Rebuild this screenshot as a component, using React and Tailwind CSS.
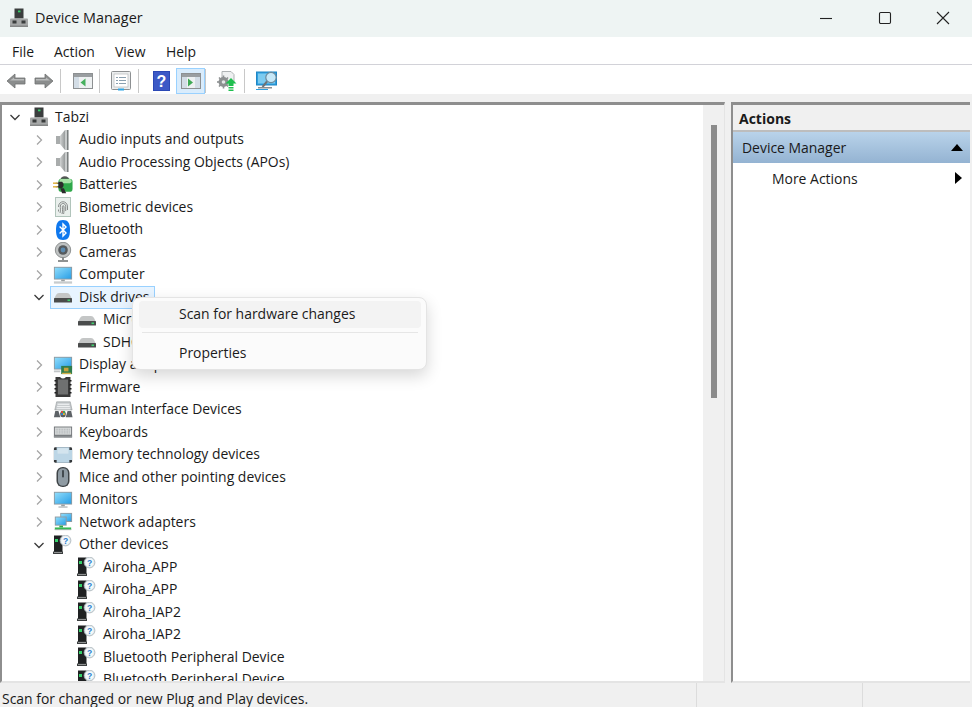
import React from "react";

const Pc = ({ s = 20 }) => (
  <svg width={s} height={s} viewBox="0 0 20 20">
    <rect x="5.5" y="0.5" width="9" height="10" fill="#3a3d3d" />
    <rect x="9" y="2.5" width="2.5" height="1.8" fill="#35d06a" />
    <rect x="1" y="10.5" width="18" height="8.5" rx="1" fill="#a5a7a7" />
    <rect x="3.5" y="12.5" width="4" height="3" fill="#3a3d3d" />
    <rect x="12.5" y="12.5" width="4" height="3" fill="#3a3d3d" />
    <rect x="1" y="17.5" width="18" height="1.5" fill="#858787" />
  </svg>
);
const Speaker = () => (
  <svg width="20" height="20" viewBox="0 0 20 20">
    <defs><linearGradient id="spk" x1="0" x2="1" y1="0" y2="0"><stop offset="0" stopColor="#d0d2d2" /><stop offset="1" stopColor="#6f7474" /></linearGradient></defs>
    <rect x="3" y="6" width="5" height="8" fill="#a9acac" />
    <path d="M7 6 L12 0 H15.5 V20 H12 L7 14 Z" fill="url(#spk)" />
    <rect x="12" y="0" width="2" height="20" fill="#c9cccc" />
  </svg>
);
const Battery = () => (
  <svg width="22" height="20" viewBox="0 0 22 20">
    <path d="M9 2 Q13 -1 17 2 L18 4 L8 4 Z" fill="#555" />
    <rect x="6" y="3" width="15.5" height="14.5" rx="3.5" fill="#2fa84a" />
    <rect x="7" y="3.5" width="13.5" height="4.5" rx="2" fill="#a7e2a6" />
    <path d="M3 7.5 H6 V6.5 H10 Q13.5 10 10 13.5 H6 V12.5 H3 V11.5 H6 V8.5 H3 Z" fill="#2b2b2b" />
    <rect x="0" y="7.2" width="5" height="1.6" fill="#e0b23c" />
    <rect x="0" y="11.2" width="5" height="1.6" fill="#e0b23c" />
    <path d="M8 13.5 L10 19 H14.5 L12 13.5 Z" fill="#2b2b2b" />
  </svg>
);
const Bio = () => (
  <svg width="20" height="20" viewBox="0 0 20 20">
    <rect x="2.5" y="0.5" width="15" height="19" fill="#e9efec" stroke="#b1c4bb" />
    <g fill="none" stroke="#7d7f7f" strokeWidth="0.9">
      <path d="M5.5 10 C5.5 3 14.5 3 14.5 10 V13" />
      <path d="M7 16 C8 13 7 11 7.3 9 C8 5.5 12.5 5.5 12.7 9.5 V14" />
      <path d="M9 17 C10 14 9.2 11 9.4 9.5 C9.8 8 11 8.5 11 10 C11 13 11 15 10.6 17" />
      <path d="M5.5 12.5 V14.5" />
    </g>
  </svg>
);
const Bt = () => (
  <svg width="20" height="20" viewBox="0 0 20 20">
    <path d="M10 0 C15 0 17 3 17 10 C17 17 15 20 10 20 C5 20 3 17 3 10 C3 3 5 0 10 0 Z" fill="#0f78ee" />
    <path d="M6.6 6.6 L13 13 L10 16 V4 L13 7 L6.6 13.4" fill="none" stroke="#fff" strokeWidth="1.4" />
  </svg>
);
const Camera = () => (
  <svg width="20" height="20" viewBox="0 0 20 20">
    <circle cx="10" cy="8" r="7.7" fill="#bfc2c2" stroke="#8f9292" />
    <circle cx="10" cy="8" r="4.8" fill="#565a5d" />
    <circle cx="10" cy="8" r="2.4" fill="#5a8ab0" />
    <rect x="9" y="15" width="2" height="3" fill="#8b8e8e" />
    <rect x="5" y="18" width="10" height="2" fill="#8f9292" />
  </svg>
);
const Screen = ({ x = 0, y = 0, w = 20, h = 14 }) => (
  <g>
    <rect x={x} y={y} width={w} height={h} fill="#8f9aa0" />
    <rect x={x + 1} y={y + 1} width={w - 2} height={h - 2} fill="url(#scr)" />
  </g>
);
const ScrDefs = ({ id = "scr" }) => (
  <defs><linearGradient id={id} x1="0" x2="1" y1="0" y2="1"><stop offset="0" stopColor="#8fdcfb" /><stop offset="1" stopColor="#2a9fe6" /></linearGradient></defs>
);
const Computer = () => (
  <svg width="22" height="20" viewBox="0 0 22 20">
    <ScrDefs />
    <Screen x={1} y={1} w={20} h={14} />
    <rect x="9" y="15" width="4" height="2" fill="#9aa0a3" />
    <rect x="1" y="17" width="20" height="2.5" fill="#c7cbcd" />
  </svg>
);
const Monitor = () => (
  <svg width="22" height="20" viewBox="0 0 22 20">
    <ScrDefs />
    <Screen x={1} y={1} w={20} h={14} />
    <rect x="9" y="15" width="4" height="2" fill="#9aa0a3" />
    <rect x="6" y="17" width="10" height="1.5" fill="#b5babc" />
  </svg>
);
const Disk = ({ s = 20 }) => (
  <svg width={s} height={s} viewBox="0 0 20 20">
    <path d="M3 8 Q4 6 6 6 H14 Q16 6 17 8 L18.5 11 H1.5 Z" fill="#c4c6c6" />
    <rect x="1" y="11" width="18" height="4.5" rx="0.5" fill="#4a4c4c" />
    <rect x="14.5" y="12.5" width="2.5" height="1.6" fill="#3fd06d" />
  </svg>
);
const Display = () => (
  <svg width="22" height="20" viewBox="0 0 22 20">
    <ScrDefs />
    <Screen x={1} y={1} w={20} h={14} />
    <rect x="9" y="11" width="12" height="9" fill="#2f7d4c" />
    <rect x="12" y="13" width="5" height="4" fill="#c8a13d" />
    <rect x="10" y="18.5" width="10" height="1.5" fill="#d6b04a" />
    <rect x="1" y="16" width="7" height="2" fill="#c2c6c8" />
  </svg>
);
const Firmware = () => (
  <svg width="20" height="20" viewBox="0 0 20 20">
    <path d="M2.5 0 H7 Q10 3 13 0 H17.5 V20 H2.5 Z" fill="#3a3a3a" />
    <rect x="5" y="2.5" width="10" height="15" fill="#6f7070" />
    <g fill="#1d1d1d">
      <rect x="1.5" y="3" width="2" height="1.5" /><rect x="1.5" y="7" width="2" height="1.5" /><rect x="1.5" y="11" width="2" height="1.5" /><rect x="1.5" y="15" width="2" height="1.5" />
      <rect x="16.5" y="3" width="2" height="1.5" /><rect x="16.5" y="7" width="2" height="1.5" /><rect x="16.5" y="11" width="2" height="1.5" /><rect x="16.5" y="15" width="2" height="1.5" />
    </g>
  </svg>
);
const Hid = () => (
  <svg width="22" height="20" viewBox="0 0 22 20">
    <path d="M4 1 H19 L21 10 H2 Z" fill="#c4c8cb" stroke="#8f9396" strokeWidth="0.6" />
    <g fill="#eef0f1"><rect x="5" y="3" width="13" height="1.4" /><rect x="4.5" y="5.5" width="14" height="1.4" /><rect x="4" y="8" width="15" height="1.2" /></g>
    <path d="M1 18 L2.5 11 H6 L8 18 Z" fill="#5d6266" />
    <path d="M14 18 L16 11 H20 L21.5 18 Z" fill="#5d6266" />
    <rect x="8" y="11" width="6" height="7" rx="2.5" fill="#595c60" />
    <rect x="9" y="11" width="2" height="2.5" fill="#e0483c" /><rect x="11" y="11" width="2" height="2.5" fill="#3aa655" />
    <rect x="9" y="13.5" width="2" height="2" fill="#2d86d8" /><rect x="11" y="13.5" width="2" height="2" fill="#e7bb35" />
  </svg>
);
const Keyboard = () => (
  <svg width="22" height="20" viewBox="0 0 22 20">
    <rect x="1" y="4" width="20" height="12" fill="#6f7376" />
    <rect x="2" y="5" width="18" height="8" fill="#d7dadb" />
    <g stroke="#9aa0a3" strokeWidth="0.8"><path d="M3 7 H19" strokeDasharray="1 0.8" /><path d="M3 9 H19" strokeDasharray="1 0.8" /><path d="M3 11 H19" strokeDasharray="1 0.8" /></g>
    <rect x="1" y="14" width="20" height="2" fill="#8b8f92" />
  </svg>
);
const Memory = () => (
  <svg width="22" height="20" viewBox="0 0 22 20">
    <rect x="1" y="1.5" width="20" height="17" rx="1.5" fill="#34383b" />
    <rect x="1" y="4.5" width="20" height="11" fill="#bcd6e6" />
    <rect x="4" y="1.5" width="14" height="17" fill="#bcd6e6" />
    <rect x="5" y="2.5" width="12" height="6" fill="#d3e4ee" />
  </svg>
);
const Mouse = () => (
  <svg width="20" height="20" viewBox="0 0 20 20">
    <rect x="3.5" y="0" width="13" height="20" rx="6" fill="#3f4447" />
    <rect x="5" y="1.2" width="10" height="17.6" rx="4.8" fill="#8f9ba3" />
    <rect x="9.2" y="3" width="1.6" height="7.5" rx="0.8" fill="#30363a" />
  </svg>
);
const Network = () => (
  <svg width="22" height="20" viewBox="0 0 22 20">
    <ScrDefs />
    <Screen x={8} y={0} w={13} h={10} />
    <Screen x={2} y={4} w={13} h={10} />
    <rect x="7" y="14" width="4" height="2" fill="#2fa84a" />
    <rect x="2" y="16" width="18" height="2.8" fill="#35b852" />
    <rect x="2" y="18" width="18" height="1" fill="#b7babc" />
  </svg>
);
const Other = () => (
  <svg width="20" height="20" viewBox="0 0 20 20">
    <path d="M1 0.5 H9.5 V17 H1 Z" fill="#1f2122" />
    <rect x="2" y="4" width="3" height="3" fill="#35d06a" />
    <rect x="0" y="16.5" width="10" height="2.5" fill="#3b3e3f" />
    <rect x="1" y="17" width="8" height="0.8" fill="#a5a7a7" />
    <circle cx="12.5" cy="5.5" r="5.4" fill="#dfe7ec" stroke="#a8b2b8" strokeWidth="0.8" />
    <circle cx="12.5" cy="5.5" r="4" fill="#f5f8fa" />
    <text x="12.5" y="8.6" textAnchor="middle" fontSize="8.5" fontWeight="700" fill="#2a7fd0" fontFamily="Liberation Sans">?</text>
  </svg>
);

const Chev = ({ open }) => (
  <svg width="16" height="16" viewBox="0 0 16 16" fill="none" stroke={open ? "#3a3a3a" : "#a6a6a6"} strokeWidth="1.3">
    {open ? <path d="M3.5 6 L8 10.5 L12.5 6" /> : <path d="M6 3.5 L10.5 8 L6 12.5" />}
  </svg>
);

const Row = ({ d, c, icon: I, label, selected }) => (
  <div className="flex items-center h-[22.5px]" style={{ paddingLeft: 5 + 24 * d }}>
    <span className="w-[16px] h-[16px] flex items-center justify-center">{c && <Chev open={c === "o"} />}</span>
    <span className={selected ? "flex items-center h-[22.5px] ml-[3px] pl-[2px] pr-[5px] bg-[#e8f4ff] border border-[#99d1ff]" : "flex items-center ml-[6px]"}>
      <span className="w-[20px] h-[20px] flex items-center justify-center overflow-visible"><I /></span>
      <span className="ml-[6px] whitespace-nowrap">{label}</span>
    </span>
  </div>
);

const rows = [
  [0, "o", Pc, "Tabzi"],
  [1, "c", Speaker, "Audio inputs and outputs"],
  [1, "c", Speaker, "Audio Processing Objects (APOs)"],
  [1, "c", Battery, "Batteries"],
  [1, "c", Bio, "Biometric devices"],
  [1, "c", Bt, "Bluetooth"],
  [1, "c", Camera, "Cameras"],
  [1, "c", Computer, "Computer"],
  [1, "o", Disk, "Disk drives", true],
  [2, null, Disk, "Microsoft Virtual Disk"],
  [2, null, Disk, "SDHC Card"],
  [1, "c", Display, "Display adapters"],
  [1, "c", Firmware, "Firmware"],
  [1, "c", Hid, "Human Interface Devices"],
  [1, "c", Keyboard, "Keyboards"],
  [1, "c", Memory, "Memory technology devices"],
  [1, "c", Mouse, "Mice and other pointing devices"],
  [1, "c", Monitor, "Monitors"],
  [1, "c", Network, "Network adapters"],
  [1, "o", Other, "Other devices"],
  [2, null, Other, "Airoha_APP"],
  [2, null, Other, "Airoha_APP"],
  [2, null, Other, "Airoha_IAP2"],
  [2, null, Other, "Airoha_IAP2"],
  [2, null, Other, "Bluetooth Peripheral Device"],
  [2, null, Other, "Bluetooth Peripheral Device"],
];

const Sep = () => <span className="w-px h-[24px] bg-[#c8c8c8]" />;
const Arrow = ({ dir }) => (
  <svg width="20" height="18" viewBox="0 0 20 18">
    <path d={dir === "l" ? "M1 9 L9 2 V6 H19 V12 H9 V16 Z" : "M19 9 L11 2 V6 H1 V12 H11 V16 Z"} fill="#8b8d8d" stroke="#707272" strokeWidth="0.8" />
    <path d={dir === "l" ? "M4 8.5 L8 5.5 V7 H18 V8.5 Z" : "M16 8.5 L12 5.5 V7 H2 V8.5 Z"} fill="#b9bbbb" />
  </svg>
);
const Win = ({ arrow }) => (
  <svg width="20" height="18" viewBox="0 0 20 18">
    <rect x="0.5" y="1.5" width="19" height="15" fill="#fff" stroke="#8d9092" />
    <rect x="1" y="2" width="18" height="3" fill="#9a9ea1" />
    <rect x="1" y="5" width="5" height="11" fill="#d3dde6" />
    <rect x="6" y="5" width="13" height="11" fill="#eef1f2" />
    <rect x="14" y="5" width="5" height="11" fill={arrow === "r" ? "#d3dde6" : "#eef1f2"} />
    {arrow === "l"
      ? <path d="M7.5 10.5 L12.5 6.5 V14.5 Z" fill="#46b05e" />
      : <path d="M12 10.5 L7 6.5 V14.5 Z" fill="#3fa955" />}
  </svg>
);
const Props = () => (
  <svg width="20" height="20" viewBox="0 0 20 20">
    <rect x="0.5" y="0.5" width="19" height="18" rx="1" fill="#eceeef" stroke="#8d9092" />
    <rect x="3" y="3" width="14" height="13" fill="#fff" stroke="#b4b8ba" strokeWidth="0.7" />
    <g stroke="#8aa0b0" strokeWidth="1"><path d="M5 6.5 H7" /><path d="M5 9.5 H7" /><path d="M5 12.5 H7" /><path d="M8 6.5 H15" /><path d="M8 9.5 H15" /><path d="M8 12.5 H15" /></g>
    <rect x="7" y="17.5" width="6" height="2" fill="#2ea6e6" />
  </svg>
);
const Help = () => (
  <svg width="17" height="20" viewBox="0 0 17 20">
    <rect width="17" height="20" fill="#2b48b5" />
    <rect x="1" y="1" width="15" height="18" fill="#3c59c6" />
    <text x="8.5" y="16" textAnchor="middle" fontSize="16" fontWeight="700" fill="#fff" fontFamily="Liberation Sans">?</text>
  </svg>
);
const Update = () => (
  <svg width="20" height="20" viewBox="0 0 20 20">
    <path d="M5 0.5 H14 L17 3.5 V11 H5 Z" fill="#eef0f1" stroke="#aeb2b4" />
    <circle cx="6.5" cy="11" r="5" fill="#8d9092" />
    <g stroke="#8d9092" strokeWidth="1.6"><path d="M6.5 4.5 V17.5" /><path d="M0 11 H13" /><path d="M2 6.5 L11 15.5" /><path d="M11 6.5 L2 15.5" /></g>
    <circle cx="6.5" cy="11" r="1.8" fill="#e4e6e7" />
    <path d="M14 7 L19.5 12.5 H16.5 V15 H11.5 V12.5 H8.5 Z" fill="#1fbf4f" />
    <rect x="11.5" y="16" width="5" height="1.5" fill="#1fbf4f" />
    <rect x="11.5" y="18.5" width="5" height="1.5" fill="#1fbf4f" />
  </svg>
);
const Scan = () => (
  <svg width="22" height="20" viewBox="0 0 22 20">
    <rect x="0.5" y="1" width="20" height="13" fill="#2e9fdf" stroke="#1f86c4" />
    <rect x="2" y="2.5" width="17" height="10" fill="#7ccbf0" />
    <circle cx="15" cy="6.5" r="5.2" fill="#c6e8f8" stroke="#6c8a9c" strokeWidth="1.2" />
    <path d="M11 10.5 L6.5 16" stroke="#6f7375" strokeWidth="2" />
    <rect x="2" y="16" width="14" height="1.5" fill="#8a8e90" />
    <rect x="0" y="18" width="12" height="1" fill="#2e9fdf" />
  </svg>
);

export default function App() {
  return (
    <div className="w-[972px] h-[707px] relative overflow-hidden bg-white text-[13.95px] text-[#1a1a1a] flex flex-col" style={{ fontFamily: '"Open Sans", "Noto Sans", sans-serif' }}>
      <div className="h-[37px] shrink-0 bg-[#eef4f3] flex items-center">
        <span className="ml-[9px] mt-[-2px]"><Pc /></span>
        <span className="ml-[6px] text-[14.4px] leading-none">Device Manager</span>
        <div className="ml-auto flex mt-[-2px]">
          <span className="w-[58px] flex justify-center mr-[1px]"><svg width="14" height="14" viewBox="0 0 14 14"><path d="M1 7.5 H13" stroke="#222" strokeWidth="1.1" /></svg></span>
          <span className="w-[58px] flex justify-center"><svg width="14" height="14" viewBox="0 0 14 14"><rect x="1.5" y="1.5" width="11" height="11" rx="1.2" fill="none" stroke="#222" strokeWidth="1.1" /></svg></span>
          <span className="w-[58px] flex justify-center"><svg width="14" height="14" viewBox="0 0 14 14"><path d="M1 1 L13 13 M13 1 L1 13" stroke="#222" strokeWidth="1.1" /></svg></span>
        </div>
      </div>
      <div className="h-[28px] shrink-0 flex items-center pl-[12px] pt-[4px] border-b border-[#d2d2d8]">
        <span className="w-[42px]">File</span>
        <span className="w-[61px]">Action</span>
        <span className="w-[51px]">View</span>
        <span>Help</span>
      </div>
      <div className="h-[29px] shrink-0 flex items-center pl-[6px] pt-[3px]">
        <span className="w-[28px] flex"><Arrow dir="l" /></span>
        <span className="w-[26px] flex"><Arrow dir="r" /></span>
        <Sep />
        <span className="w-[38px] flex justify-center pl-[5px]"><Win arrow="l" /></span>
        <Sep />
        <span className="w-[38px] flex justify-center pl-[4px]"><Props /></span>
        <Sep />
        <span className="w-[36px] flex justify-center pl-[8px]"><Help /></span>
        <span className="w-[29px] h-[26px] ml-px flex items-center justify-center bg-[#d9ecfc] border border-[#99d1ff]"><Win arrow="r" /></span>
        <Sep />
        <span className="w-[38px] flex justify-center pl-[4px]"><Update /></span>
        <Sep />
        <span className="w-[38px] flex justify-center pl-[5px]"><Scan /></span>
      </div>
      <div className="flex-1 min-h-0 flex flex-col bg-[#f0f0f0] pt-[8px]">
        <div className="flex-1 min-h-0 flex">
          <div className="w-[725px] flex border-t-[3px] border-l-2 border-t-[#8e8e8e] border-l-[#8e8e8e] border-b-2 border-b-[#e4e4e4] border-r border-r-[#e4e4e4]">
            <div className="flex-1 bg-white overflow-hidden pt-[1px]">
              {rows.map((r, i) => (
                <Row key={i} d={r[0]} c={r[1]} icon={r[2]} label={r[3]} selected={r[4]} />
              ))}
            </div>
            <div className="w-[21px] bg-[#f0f0f0] flex justify-center pt-[20px]">
              <span className="w-[6px] h-[273px] bg-[#8b8b8b]" />
            </div>
          </div>
          <div className="ml-[6px] w-[239px] flex flex-col bg-white border-t-[3px] border-l-2 border-t-[#8e8e8e] border-l-[#8e8e8e] border-b-2 border-b-[#e4e4e4]">
            <div className="h-[27px] shrink-0 bg-[#f0f0f0] flex items-center pl-[6px] pt-[2px] font-bold border-b-2 border-[#bdbdbd] text-[14px]">Actions</div>
            <div className="h-[31px] shrink-0 bg-gradient-to-b from-[#b9d3ea] to-[#94b3d2] flex items-center pl-[9px] pr-[7px] justify-between">
              <span className="mt-[2px]">Device Manager</span>
              <svg width="12" height="7" viewBox="0 0 12 7"><path d="M6 0 L12 7 H0 Z" fill="#000" /></svg>
            </div>
            <div className="h-[30px] shrink-0 flex items-center pl-[39px] pr-[8px] justify-between">
              <span className="mt-[2px]">More Actions</span>
              <svg width="7" height="12" viewBox="0 0 7 12"><path d="M0 0 L7 6 L0 12 Z" fill="#000" /></svg>
            </div>
          </div>
        </div>
        <div className="h-[24px] shrink-0 flex">
          <span className="w-[697px] pl-[2px] pt-[6px] h-full border-r border-[#dcdcdc] whitespace-nowrap">Scan for changed or new Plug and Play devices.</span>
          <span className="w-[166px] h-full border-r border-[#dcdcdc]" />
        </div>
      </div>

      <div className="absolute left-[132px] top-[297px] w-[295px] h-[73px] bg-[#fbfbfb] rounded-[8px] border border-[#e4e4e4] shadow-[0_6px_16px_rgba(0,0,0,0.16)] p-[3px_5px_0_6px]">
        <div className="h-[27px] rounded-[4px] bg-[#f3f3f3] flex items-center pl-[40px] text-[#1b1b1b]">Scan for hardware changes</div>
        <div className="h-px bg-[#e6e6e6] mx-[3px] mt-[4px]" />
        <div className="h-[37px] flex items-center pl-[40px] pt-[3px] text-[#1b1b1b]">Properties</div>
      </div>
    </div>
  );
}
